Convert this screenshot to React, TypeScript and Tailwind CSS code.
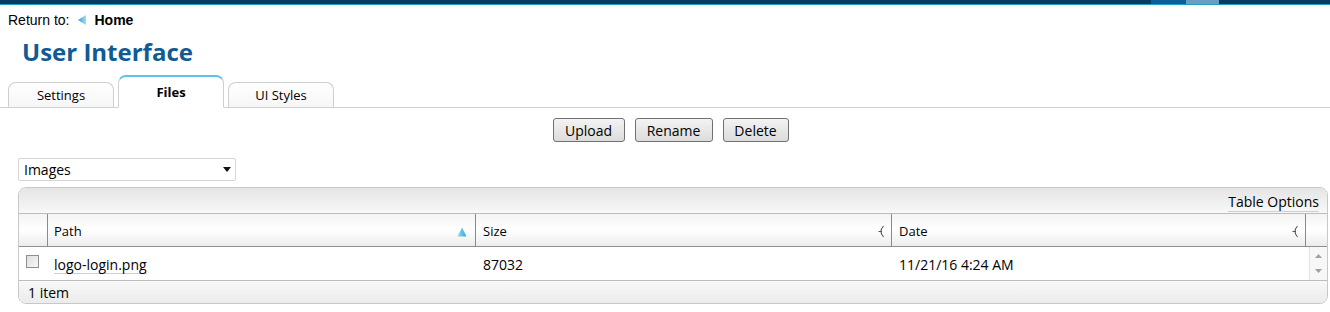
import React from "react";

const open = { fontFamily: '"Open Sans", "Noto Sans", sans-serif' };

function SortIdle() {
  return (
    <svg width="7" height="13" viewBox="0 0 7 13" className="shrink-0">
      <path d="M5.5 1 C2.3 4.5 2.3 8.5 5.5 12" stroke="#555" strokeWidth="1.1" fill="none" />
      <path d="M0.5 6.5 L4 6.5" stroke="#555" strokeWidth="1" />
    </svg>
  );
}

function SortUp() {
  return (
    <svg width="10" height="10" viewBox="0 0 10 10" className="shrink-0">
      <defs>
        <linearGradient id="su" x1="0" y1="0" x2="1" y2="0">
          <stop offset="0" stopColor="#9ad8f2" />
          <stop offset="1" stopColor="#2ea7dc" />
        </linearGradient>
      </defs>
      <path d="M5 0.5 L9.5 9.5 L0.5 9.5 Z" fill="url(#su)" />
    </svg>
  );
}

export default function App() {
  const tabs = [
    { name: "Settings", active: false },
    { name: "Files", active: true },
    { name: "UI Styles", active: false },
  ];

  return (
    <div className="w-[1330px] h-[312px] bg-white text-black overflow-hidden" style={open}>
      {/* top bar */}
      <div className="flex h-[4px] bg-[#0a3b62]">
        <div className="flex-1" />
        <div className="w-[35px] bg-[#0d5f99]" />
        <div className="w-[33px] bg-[#6b9dc2]" />
        <div className="w-[111px]" />
      </div>
      <div className="h-px bg-[#17a2c0]" />

      {/* return to */}
      <div
        className="flex items-center h-[20px] mt-[5px] pl-[8px] text-[14px]"
        style={{ fontFamily: '"Liberation Sans", Arial, sans-serif' }}
      >
        <span>Return to:</span>
        <svg width="8" height="10" viewBox="0 0 8 10" className="ml-[9px] mr-[8px]">
          <defs>
            <linearGradient id="rt" x1="0" y1="0" x2="1" y2="0">
              <stop offset="0" stopColor="#2a9fd6" />
              <stop offset="1" stopColor="#a8dcf2" />
            </linearGradient>
          </defs>
          <path d="M0 5 L8 0 L8 10 Z" fill="url(#rt)" />
        </svg>
        <span className="font-bold">Home</span>
      </div>

      {/* title */}
      <div className="h-[32px] mt-[6px] pl-[22px] text-[24px] leading-[32px] font-bold text-[#105b94]">
        User Interface
      </div>

      {/* tabs */}
      <div className="flex items-end gap-[4px] h-[40px] pl-[8px] border-b border-[#d0d0d0]">
        {tabs.map((t) =>
          t.active ? (
            <div
              key={t.name}
              className="-mb-px w-[106px] h-[33px] flex justify-center pt-[6px] rounded-t-[8px] border border-[#cfcfcf] border-t-2 border-t-[#5cc2ec] border-b-white bg-white text-[13px] font-bold"
            >
              {t.name}
            </div>
          ) : (
            <div
              key={t.name}
              className="w-[106px] h-[25px] flex justify-center items-center pt-[2px] rounded-t-[8px] border border-b-0 border-[#cfcfcf] bg-gradient-to-b from-white to-[#f6f6f6] text-[13px]"
            >
              {t.name}
            </div>
          )
        )}
      </div>

      {/* buttons */}
      <div className="flex justify-center gap-[10px] mt-[10px] pl-[11px]">
        {[
          { n: "Upload", w: "w-[72px]" },
          { n: "Rename", w: "w-[78px]" },
          { n: "Delete", w: "w-[66px]" },
        ].map((b) => (
          <button
            key={b.n}
            className={`${b.w} h-[24px] flex items-center justify-center rounded-[3px] border border-[#707070] bg-gradient-to-b from-[#f3f3f3] to-[#dcdcdc] text-[14px]`}
          >
            {b.n}
          </button>
        ))}
      </div>

      {/* select */}
      <div className="mt-[16px] ml-[18px] w-[218px] h-[23px] flex items-center justify-between pl-[5px] pr-[4px] rounded-[2px] border border-[#d6d6d6] text-[14px]">
        <span>Images</span>
        <svg width="8" height="5" viewBox="0 0 8 5">
          <path d="M0 0 L8 0 L4 5 Z" fill="#111" />
        </svg>
      </div>

      {/* grid */}
      <div className="mt-[6px] ml-[18px] w-[1310px] h-[117px] flex flex-col rounded-[8px] border border-[#c8c8c8] overflow-hidden">
        <div className="h-[25px] flex items-center justify-end pr-[8px] bg-gradient-to-b from-[#e5e5e5] to-[#f8f8f8]">
          <span className="text-[14px] leading-[18px] border-b border-[#cfcfcf] pt-[3px]">Table Options</span>
        </div>

        {/* header */}
        <div className="h-[34px] flex border-y border-t-[#bdbdbd] border-b-[#8f8f8f] bg-gradient-to-b from-[#f4f4f4] via-white to-[#ececec] text-[13px]">
          <div className="w-[29px] border-r border-[#8a8a8a]" />
          <div className="w-[428px] flex items-center justify-between pt-[3px] pl-[6px] pr-[8px] border-r border-[#8a8a8a]">
            <span>Path</span>
            <SortUp />
          </div>
          <div className="w-[416px] flex items-center justify-between pt-[3px] pl-[7px] pr-[6px] border-r border-[#8a8a8a]">
            <span>Size</span>
            <SortIdle />
          </div>
          <div className="w-[414px] flex items-center justify-between pt-[3px] pl-[7px] pr-[6px] border-r border-[#8a8a8a]">
            <span>Date</span>
            <SortIdle />
          </div>
          <div className="flex-1" />
        </div>

        {/* row */}
        <div className="h-[34px] flex text-[14px] border-b border-[#bcbcbc]">
          <div className="w-[29px] flex items-start justify-center pt-[8px] pr-[2px]">
            <div className="w-[13px] h-[13px] border border-[#8f8f8f] bg-gradient-to-br from-[#dedede] to-[#f8f8f8]" />
          </div>
          <div className="w-[428px] flex items-center pt-[2px] pl-[6px]">
            <span className="leading-[17px] border-b border-[#cfcfcf]">logo-login.png</span>
          </div>
          <div className="w-[416px] flex items-center pt-[2px] pl-[7px]">87032</div>
          <div className="w-[417px] flex items-center pt-[2px] pl-[7px]">11/21/16 4:24 AM</div>
          <div className="flex-1 flex flex-col items-center justify-between py-[7px] border-l border-[#e2e2e2] bg-[#f7f7f7]">
            <svg width="7" height="4" viewBox="0 0 7 4">
              <path d="M0 4 L3.5 0 L7 4 Z" fill="#a0a0a0" />
            </svg>
            <svg width="7" height="4" viewBox="0 0 7 4">
              <path d="M0 0 L7 0 L3.5 4 Z" fill="#a0a0a0" />
            </svg>
          </div>
        </div>

        {/* footer */}
        <div className="flex-1 flex items-center pl-[9px] text-[14px] bg-gradient-to-b from-[#f8f8f8] to-[#ebebeb]">
          1 item
        </div>
      </div>
    </div>
  );
}
